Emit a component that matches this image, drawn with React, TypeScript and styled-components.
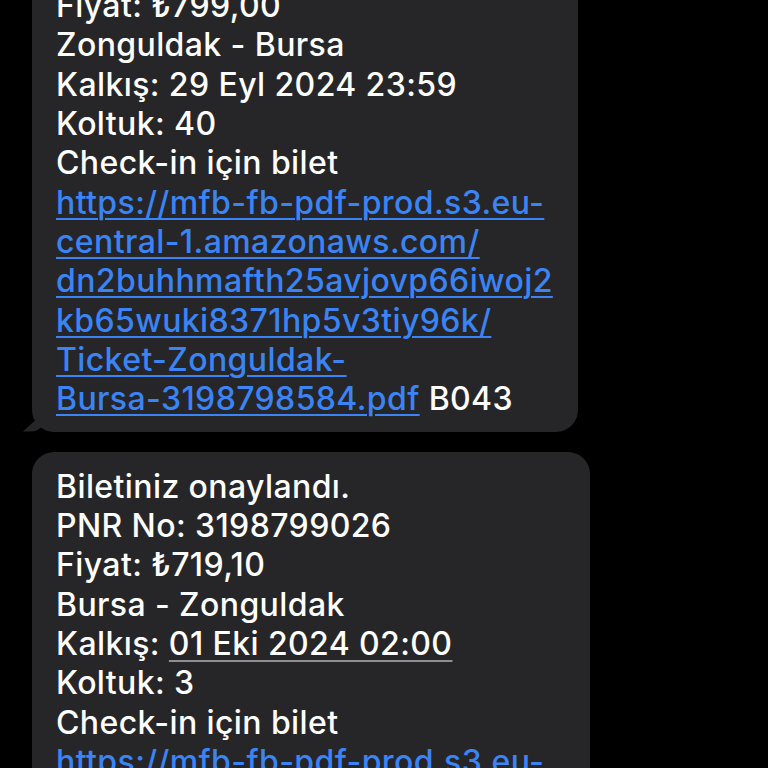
import React from "react";
import styled, { createGlobalStyle } from "styled-components";

const Global = createGlobalStyle`
  html, body { margin: 0; padding: 0; background: #000; }
  body { overflow: hidden; height: 768px; }
  #root { background: #000; }
`;

const Screen = styled.div`
  width: 768px;
  height: 768px;
  overflow: hidden;
  background: #000;
  display: flex;
  flex-direction: column;
  gap: 20px;
  padding-left: 32px;
  box-sizing: border-box;
`;

const Bubble = styled.div<{ $w: number; $top?: number; $tail?: boolean }>`
  position: relative;
  width: ${(p) => p.$w}px;
  box-sizing: border-box;
  margin-top: ${(p) => p.$top ?? 0}px;
  background: #262628;
  border-radius: 22px;
  padding: 15px 0 13px 24px;
  font-family: Inter, "Liberation Sans", sans-serif;
  font-size: 32px;
  font-weight: 500;
  letter-spacing: 0.4px;
  line-height: 39.33px;
  color: #fff;
  flex-shrink: 0;
  ${(p) =>
    p.$tail
      ? `&::after {
    content: "";
    position: absolute;
    left: -9px;
    bottom: 0;
    width: 22px;
    height: 20px;
    background: #262628;
    border-bottom-right-radius: 16px 14px;
    clip-path: polygon(0 100%, 100% 0, 100% 100%);
  }`
      : ""}
`;

const Line = styled.div`
  white-space: nowrap;
`;

const Link = styled.span`
  color: #3b84f5;
  text-decoration: underline;
  text-decoration-thickness: 2px;
  text-underline-offset: 4px;
`;

const DateMark = styled.span`
  text-decoration: underline;
  text-decoration-color: #8e8e93;
  text-decoration-thickness: 2px;
  text-underline-offset: 5px;
`;

export default function App() {
  return (
    <>
      <Global />
      <Screen>
        <Bubble $w={546} $top={-29} $tail>
          <Line>Fiyat: ₺799,00</Line>
          <Line>Zonguldak - Bursa</Line>
          <Line>Kalkış: 29 Eyl 2024 23:59</Line>
          <Line>Koltuk: 40</Line>
          <Line>Check-in için bilet</Line>
          <Line><Link>https://mfb-fb-pdf-prod.s3.eu-</Link></Line>
          <Line><Link>central-1.amazonaws.com/</Link></Line>
          <Line><Link>dn2buhhmafth25avjovp66iwoj2</Link></Line>
          <Line><Link>kb65wuki8371hp5v3tiy96k/</Link></Line>
          <Line><Link>Ticket-Zonguldak-</Link></Line>
          <Line><Link>Bursa-3198798584.pdf</Link> B043</Line>
        </Bubble>
        <Bubble $w={558}>
          <Line>Biletiniz onaylandı.</Line>
          <Line>PNR No: 3198799026</Line>
          <Line>Fiyat: ₺719,10</Line>
          <Line>Bursa - Zonguldak</Line>
          <Line>Kalkış: <DateMark>01 Eki 2024 02:00</DateMark></Line>
          <Line>Koltuk: 3</Line>
          <Line>Check-in için bilet</Line>
          <Line><Link>https://mfb-fb-pdf-prod.s3.eu-</Link></Line>
          <Line><Link>central-1.amazonaws.com/</Link></Line>
        </Bubble>
      </Screen>
    </>
  );
}
